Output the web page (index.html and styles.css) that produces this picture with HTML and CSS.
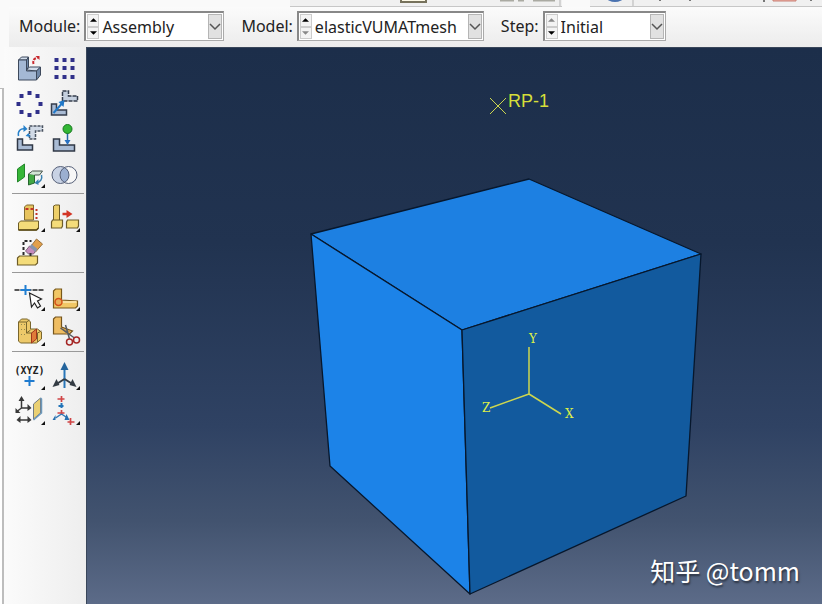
FILE: index.html
```
<!DOCTYPE html>
<html lang="en">
<head>
    <meta charset="UTF-8">
    <meta name="viewport" content="width=device-width, initial-scale=1.0">
    <title>Assembly - elasticVUMATmesh</title>
    <link rel="stylesheet" href="styles.css">
</head>
<body>
    <div class="top-strip">
        <div class="strip-panel strip-left">
            <svg width="272" height="6" viewBox="0 0 272 6" aria-hidden="true">
                <path d="M111 0V2H136V0" fill="#fffbe8" stroke="#77725c" stroke-width="2"/>
                <path d="M210 0H224M228 0H234M243 0H265" stroke="#aaaaa2" stroke-width="3"/>
                <path d="M270 0V6" stroke="#b5b5b5"/>
            </svg>
        </div>
        <div class="strip-panel strip-right">
            <svg width="232" height="6" viewBox="0 0 232 6" aria-hidden="true">
                <ellipse cx="25" cy="-2" rx="8" ry="4" fill="#4a72b0"/>
                <path d="M43 0V6" stroke="#b5b5b5"/>
                <path d="M70 0V1M100 0V1M174 0V2M221 0V1" stroke="#777" stroke-width="2"/>
                <path d="M183 -1H206V1H183Z" fill="#efb0a4" stroke="#c77f74"/>
            </svg>
        </div>
    </div>

    <div class="context-bar">
        <div class="field">
            <label for="module">Module:</label>
            <div class="combo combo-module">
                <div class="spinner">
                    <button type="button" aria-label="Previous module"><svg viewBox="0 0 8 5"><path d="M4 0L8 4H0Z"/></svg></button>
                    <button type="button" aria-label="Next module"><svg viewBox="0 0 8 5"><path d="M0 1H8L4 5Z"/></svg></button>
                </div>
                <select id="module"><option>Assembly</option></select>
                <span class="arrow"><svg viewBox="0 0 12 8"><path d="M1 1L6 6L11 1"/></svg></span>
            </div>
        </div>
        <div class="field">
            <label for="model">Model:</label>
            <div class="combo combo-model">
                <div class="spinner">
                    <button type="button" aria-label="Previous model"><svg viewBox="0 0 8 5"><path d="M4 0L8 4H0Z"/></svg></button>
                    <button type="button" aria-label="Next model" disabled><svg viewBox="0 0 8 5"><path d="M0 1H8L4 5Z"/></svg></button>
                </div>
                <select id="model"><option>elasticVUMATmesh</option></select>
                <span class="arrow"><svg viewBox="0 0 12 8"><path d="M1 1L6 6L11 1"/></svg></span>
            </div>
        </div>
        <div class="field">
            <label for="step">Step:</label>
            <div class="combo combo-step">
                <div class="spinner">
                    <button type="button" aria-label="Previous step" disabled><svg viewBox="0 0 8 5"><path d="M4 0L8 4H0Z"/></svg></button>
                    <button type="button" aria-label="Next step"><svg viewBox="0 0 8 5"><path d="M0 1H8L4 5Z"/></svg></button>
                </div>
                <select id="step"><option>Initial</option></select>
                <span class="arrow"><svg viewBox="0 0 12 8"><path d="M1 1L6 6L11 1"/></svg></span>
            </div>
        </div>
    </div>

    <div class="workspace">
        <div class="gutter"></div>
        <div class="toolbox">
            <div class="tool-group">
                <button type="button" class="tool" aria-label="Create instance">
                    <svg viewBox="0 0 34 34">
                        <path d="M6 9L9 6H16L14 9Z" fill="#d3deec" stroke="#3d495c"/>
                        <path d="M14 19L17 16H28L24 20Z" fill="#d3deec" stroke="#3d495c"/>
                        <path d="M14 9L16 6V16L14 19ZM24 20L28 16V24L24 29Z" fill="#7088a8" stroke="#3d495c"/>
                        <path d="M6 9H14V20H24V29H6Z" fill="#a4b8d4" stroke="#3d495c"/>
                        <path d="M21 13C20 9 22 7 25 7" fill="none" stroke="#c8282e" stroke-width="2" stroke-dasharray="3 1"/>
                        <path d="M23 5H27V9Z" fill="#c8282e"/>
                    </svg>
                </button>
                <button type="button" class="tool" aria-label="Linear pattern">
                    <svg viewBox="0 0 34 34">
                        <path d="M7 7h4v4h-4zM15 7h4v4h-4zM23 7h4v4h-4zM7 15h4v4h-4zM15 15h4v4h-4zM23 15h4v4h-4zM7 24h4v4h-4zM15 24h4v4h-4zM23 24h4v4h-4z" fill="#30308a"/>
                    </svg>
                </button>
                <button type="button" class="tool" aria-label="Radial pattern">
                    <svg viewBox="0 0 34 34">
                        <path d="M15 5h4v4h-4zM23 8h4v4h-4zM26 16h4v4h-4zM23 24h4v4h-4zM15 27h4v4h-4zM7 24h4v4h-4zM4 16h4v4h-4zM7 8h4v4h-4z" fill="#30308a"/>
                    </svg>
                </button>
                <button type="button" class="tool" aria-label="Translate instance">
                    <svg viewBox="0 0 34 34">
                        <path d="M15 5H21V10H30V15H15Z" fill="#c5d0df" stroke="#343d4c" stroke-width="1.5" stroke-dasharray="4 1"/>
                        <path d="M4 18H9V24H19V29H4Z" fill="#a9bbd4" stroke="#343d4c" stroke-width="1.5"/>
                        <path d="M6 27L14 18" stroke="#2078c8" stroke-width="2"/>
                        <path d="M17 14L16 21L11 16Z" fill="#2078c8"/>
                    </svg>
                </button>
                <button type="button" class="tool" aria-label="Rotate instance">
                    <svg viewBox="0 0 34 34">
                        <path d="M17 5H30V10H23V18H17Z" fill="#d1dae6" stroke="#4a5360" stroke-width="1.5" stroke-dasharray="3 1"/>
                        <path d="M5 18H10V24H20V29H5Z" fill="#a9bbd4" stroke="#303846" stroke-width="1.5"/>
                        <path d="M6 15C5 10 8 7 13 8" fill="none" stroke="#2680ca" stroke-width="1.5"/>
                        <path d="M11 4L15 8L11 11ZM13 15L16 12L18 16Z" fill="#2680ca"/>
                    </svg>
                </button>
                <button type="button" class="tool" aria-label="Translate to">
                    <svg viewBox="0 0 34 34">
                        <path d="M6 18H12V24H27V30H6Z" fill="#a9bbd4" stroke="#303846" stroke-width="1.5"/>
                        <path d="M20 12V22" stroke="#2468a8" stroke-width="1.5"/>
                        <path d="M17 19H23L20 24Z" fill="#2870c0"/>
                        <circle cx="20" cy="8" r="4.5" fill="#32b634" stroke="#187820"/>
                    </svg>
                </button>
                <button type="button" class="tool more" aria-label="Face constraint">
                    <svg viewBox="0 0 34 34">
                        <path d="M5 13L12 8V21L5 26Z" fill="#37b637" stroke="#23852b"/>
                        <path d="M16 18H22V27L16 29Z" fill="#43a944" stroke="#26652e"/>
                        <path d="M16 18L20 15H30L27 19H22" fill="#d4e5d6" stroke="#46534a"/>
                        <path d="M24 27C28 26 30 23 29 19" fill="none" stroke="#3880b0" stroke-width="1.5"/>
                        <path d="M22 27L26 23V29Z" fill="#3880b0"/>
                    </svg>
                </button>
                <button type="button" class="tool" aria-label="Merge or cut instances">
                    <svg viewBox="0 0 34 34">
                        <circle cx="13" cy="19" r="8.5" fill="#c8d2e4"/>
                        <circle cx="21" cy="19" r="8.5" fill="#f7f7f7"/>
                        <path d="M17 11.5A8.5 8.5 0 0 1 17 26.5A8.5 8.5 0 0 1 17 11.5" fill="#9bafd0"/>
                        <circle cx="13" cy="19" r="8.5" fill="none" stroke="#566078"/>
                        <circle cx="21" cy="19" r="8.5" fill="none" stroke="#566078"/>
                    </svg>
                </button>
            </div>

            <div class="tool-group">
                <button type="button" class="tool more" aria-label="Create feature">
                    <svg viewBox="0 0 34 34">
                        <path d="M12 7L14 5H21V20H12Z" fill="#e8c45e" stroke="#806b30"/>
                        <path d="M6 23L8 21H26V28L24 30H6Z" fill="#f4dc7a" stroke="#6d5c28"/>
                        <path d="M6 30H24L26 28" fill="none" stroke="#574713" stroke-width="1.5"/>
                        <path d="M13 9H21" stroke="#c33426" stroke-width="2" stroke-dasharray="3 2"/>
                        <path d="M24 9V21" stroke="#c33426" stroke-width="2" stroke-dasharray="2 2"/>
                    </svg>
                </button>
                <button type="button" class="tool more" aria-label="Move feature">
                    <svg viewBox="0 0 34 34">
                        <path d="M6 6L8 5H12V21H6Z" fill="#edcf69" stroke="#6d5c28"/>
                        <path d="M4 22L5 20H15V26L14 28H4ZM19 22L20 20H31V26L30 28H19Z" fill="#f4dc7a" stroke="#6d5c28" stroke-width="1.2"/>
                        <path d="M15 14H20" stroke="#d33525" stroke-width="2.5"/>
                        <path d="M19 10L25 14L19 18Z" fill="#d33525"/>
                    </svg>
                </button>
                <button type="button" class="tool" aria-label="Delete feature">
                    <svg viewBox="0 0 34 34">
                        <path d="M11 20V6H19" fill="none" stroke="#282828" stroke-width="2" stroke-dasharray="3 2"/>
                        <path d="M5 23L7 21H25V28L23 30H5Z" fill="#f4dc7a" stroke="#6d5c28" stroke-width="1.2"/>
                        <path d="M17 13L24 4L30 9L23 17Z" fill="#e2a04b" stroke="#9a713c"/>
                        <path d="M17 11L23 16L21 19H16L13 16Z" fill="#c58bbd" stroke="#80657c"/>
                        <path d="M19 9L25 14L23 17L17 12Z" fill="#8994ab"/>
                        <path d="M18 18V21" stroke="#333" stroke-width="2"/>
                    </svg>
                </button>
            </div>

            <div class="tool-group">
                <button type="button" class="tool more" aria-label="Query position">
                    <svg viewBox="0 0 34 34">
                        <path d="M2 11H32" stroke="#252525" stroke-width="1.5" stroke-dasharray="5 1"/>
                        <path d="M8 11H18M13 6V16" stroke="#217fd2" stroke-width="2"/>
                        <path d="M17 14L19 28L22 24L25 29L28 27L25 22L29 20Z" fill="#fff" stroke="#222" stroke-width="1.2"/>
                    </svg>
                </button>
                <button type="button" class="tool more" aria-label="Partition edge">
                    <svg viewBox="0 0 34 34">
                        <path d="M6 12L8 10H14V21L30 22V27L28 29H6Z" fill="#f1c765" stroke="#78591b" stroke-width="1.2"/>
                        <path d="M14 23H29" stroke="#f8dfa0" stroke-width="2"/>
                        <circle cx="11" cy="23" r="3.5" fill="#e8ad58" stroke="#d55119" stroke-width="1.5"/>
                    </svg>
                </button>
                <button type="button" class="tool more" aria-label="Partition cell">
                    <svg viewBox="0 0 34 34">
                        <path d="M6 8L9 5H15L18 8V15H25L29 18V25L24 29H8L6 27Z" fill="#edc96a" stroke="#79662d"/>
                        <path d="M6 8H14V19L18 16M14 19H25V28M14 8L17 6M25 19L29 17" fill="none" stroke="#79662d"/>
                        <path d="M9 10V25M12 10V25" stroke="#92894f" stroke-dasharray="1 4"/>
                        <path d="M19 19L24 15V25L19 29Z" fill="#e17b39" stroke="#a3361d"/>
                    </svg>
                </button>
                <button type="button" class="tool" aria-label="Cut geometry">
                    <svg viewBox="0 0 34 34">
                        <path d="M6 5L8 3H14V13L25 17L22 20H6Z" fill="#efbd62" stroke="#75551d" stroke-width="1.2"/>
                        <path d="M13 14L23 17L19 20Z" fill="#c49348"/>
                        <path d="M18 11L22 25M13 14L27 24" stroke="#555b62" stroke-width="1.5"/>
                        <circle cx="22" cy="28" r="3" fill="none" stroke="#a52726" stroke-width="1.5"/>
                        <circle cx="29" cy="26" r="3" fill="none" stroke="#a52726" stroke-width="1.5"/>
                    </svg>
                </button>
            </div>

            <div class="tool-group">
                <button type="button" class="tool more" aria-label="Create datum point">
                    <svg viewBox="0 0 34 34">
                        <text x="17" y="16" class="xyz">(XYZ)</text>
                        <path d="M12 23H22M17 18V28" stroke="#1f7bcf" stroke-width="2"/>
                    </svg>
                </button>
                <button type="button" class="tool more" aria-label="Create datum coordinate system">
                    <svg viewBox="0 0 34 34">
                        <path d="M17 30V8" stroke="#2976b8" stroke-width="2"/>
                        <path d="M13 12L17 4L21 12Z" fill="#24649c"/>
                        <path d="M17 21L9 26M17 21L25 26" stroke="#333b43" stroke-width="2"/>
                        <path d="M9 21L12 27L5 29ZM25 21L22 27L29 29Z" fill="#333b43"/>
                    </svg>
                </button>
                <button type="button" class="tool more" aria-label="Edit datum plane">
                    <svg viewBox="0 0 34 34">
                        <path d="M9 15V6M9 15L5 18M9 15H17M7 27H16" fill="none" stroke="#383838" stroke-width="1.5"/>
                        <path d="M6 8L9 3L12 8ZM3 15V20H8ZM15 11L19 15L15 18ZM8 23V30L4 27ZM15 23L19 27L15 30Z" fill="#383838"/>
                        <path d="M21 11L28 5V20L21 26Z" fill="#ead073" stroke="#737d83"/>
                        <path d="M28 5L29 6V20L21 27" fill="none" stroke="#6d98ba" stroke-width="1.5"/>
                    </svg>
                </button>
                <button type="button" class="tool more" aria-label="Edit datum">
                    <svg viewBox="0 0 34 34">
                        <path d="M10 6H17M14 3V9M10 20H17M14 17V22M20 29H27M23 25V32" stroke="#d04445" stroke-width="1.7"/>
                        <path d="M11 13H16M14 10V15" stroke="#2374b8" stroke-width="2"/>
                        <path d="M14 21L8 25M14 21L20 25" stroke="#3178b5" stroke-width="1.5"/>
                        <path d="M8 22V27H5ZM19 21L22 27H17Z" fill="#2670b0"/>
                    </svg>
                </button>
            </div>
        </div>

        <main class="viewport">
            <svg class="scene" viewBox="0 1 735 557" preserveAspectRatio="xMidYMin slice" role="img" aria-label="Assembly viewport">
                <g class="cube">
                    <path class="face-top" d="M224 187L442 132L614 207L375 283Z"/>
                    <path class="face-left" d="M224 187L375 283L383 547L243 419Z"/>
                    <path class="face-right" d="M375 283L614 207L599 449L383 547Z"/>
                </g>
                <g class="reference-point">
                    <path d="M403 51L419 67M419 51L403 67"/>
                    <text x="421" y="60">RP-1</text>
                </g>
                <g class="triad">
                    <path d="M442 347V300M442 347L474 367M442 347L403 361"/>
                    <text x="442" y="296">Y</text>
                    <text x="478" y="371">X</text>
                    <text x="395" y="365">Z</text>
                </g>
            </svg>
            <span class="watermark">知乎 @tomm</span>
        </main>
    </div>
</body>
</html>
```

FILE: styles.css
```
* {
    box-sizing: border-box;
}
body {
    margin: 0;
    height: 100vh;
    display: flex;
    flex-direction: column;
    overflow: hidden;
    background-color: #fafafa;
    font-family: 'Noto Sans', 'Noto Sans CJK SC', sans-serif;
    font-size: 16px;
    color: #222;
}
button {
    margin: 0;
    padding: 0;
    border: none;
    background: none;
}
svg {
    display: block;
}

/* bottom edge of the docked toolbars */
.top-strip {
    display: flex;
    flex: none;
    justify-content: flex-end;
    gap: 28px;
    height: 7px;
}
.strip-panel {
    overflow: hidden;
    background-color: #f0f0f0;
    border-bottom: 1px solid #c6c6c6;
}

/* module / model / step selectors */
.context-bar {
    display: flex;
    flex: none;
    align-items: center;
    gap: 17px;
    height: 40px;
    margin-left: 9px;
    padding: 0 10px 2px;
    background: linear-gradient(#fbfbfb, #ececec);
}
.field {
    display: flex;
    align-items: center;
    gap: 4px;
}
.combo {
    display: flex;
    height: 30px;
    padding: 1px;
    background-color: #fff;
    border: 1px solid #aaa;
    border-top: 2px solid #888;
    border-left: 2px solid #888;
}
.combo-module {
    width: 140px;
}
.combo-model {
    width: 187px;
}
.combo-step {
    width: 123px;
}
.spinner {
    display: flex;
    flex-direction: column;
    flex: none;
    width: 12px;
}
.spinner button {
    display: flex;
    flex: 1;
    align-items: center;
    justify-content: center;
    background-color: #f3f3f3;
    border: 1px solid #ccc;
}
.spinner svg {
    width: 7px;
    height: 5px;
}
.spinner button:disabled path {
    fill: #888;
}
.combo select {
    flex: 1;
    min-width: 0;
    padding: 0 0 0 3px;
    appearance: none;
    background: none;
    border: none;
    color: #222;
    font: inherit;
}
.arrow {
    display: flex;
    flex: none;
    align-items: center;
    justify-content: center;
    width: 14px;
    background-color: #e1e1e1;
    border: 1px solid #b5b5b5;
    pointer-events: none;
}
.arrow svg {
    width: 12px;
    height: 8px;
    fill: none;
    stroke: #555;
    stroke-width: 1.5;
}

.workspace {
    display: flex;
    flex: 1;
    min-height: 0;
}
.gutter {
    flex: none;
    width: 4px;
    margin-top: 41px;
    background-color: #fff;
    border-top: 1px solid #bbb;
    border-right: 2px solid #bdbdbd;
}
.toolbox {
    flex: none;
    width: 82px;
    padding: 4px 2px 0 8px;
    background: linear-gradient(to right, #fbfbfb, #eee);
}
.tool-group {
    display: grid;
    grid-template-columns: 35px 35px;
    grid-auto-rows: 35px;
    padding: 0 0 2px;
    border-bottom: 1px solid #999;
}
.tool-group + .tool-group {
    padding: 6px 0 2px;
}
.tool-group:last-child {
    border-bottom: none;
}
.tool {
    position: relative;
    width: 35px;
    height: 34px;
}
.tool svg {
    width: 35px;
    height: 34px;
}
.more::after {
    content: '';
    position: absolute;
    right: 2px;
    bottom: 2px;
    border-left: 4px solid transparent;
    border-bottom: 4px solid #111;
}
.xyz {
    font-family: 'DejaVu Sans Mono', monospace;
    font-size: 10px;
    font-weight: bold;
    text-anchor: middle;
    fill: #222;
}

.viewport {
    position: relative;
    flex: 1;
    min-width: 0;
    border-top: 1px solid #39465a;
    border-left: 1px solid #39465a;
    background: linear-gradient(#1c2e4a, #213350 35%, #2f4263 68%, #42536f 85%, #5c6b88);
}
.scene {
    width: 100%;
    height: 100%;
}
.cube path {
    stroke: #07172c;
    stroke-width: 1.3;
    stroke-linejoin: round;
}
.cube .face-top {
    fill: #1d80e2;
}
.cube .face-left {
    fill: #1c83e8;
}
.cube .face-right {
    fill: #125a9e;
}
.reference-point path,
.triad path {
    fill: none;
    stroke: #cdd64f;
    stroke-width: 1.5;
}
.reference-point path {
    stroke-width: 1;
}
.reference-point text {
    font-family: 'Liberation Sans', Arial, sans-serif;
    font-size: 18px;
    fill: #d6de3a;
}
.triad text {
    font-family: 'DejaVu Serif', serif;
    font-size: 12px;
    fill: #dcef48;
}
.watermark {
    position: absolute;
    right: 22px;
    bottom: 16px;
    color: #fff;
    font-family: 'Noto Sans CJK SC', sans-serif;
    font-size: 25px;
    line-height: 36px;
    text-shadow: 1px 2px 2px rgba(0, 0, 0, 0.5);
}
```
